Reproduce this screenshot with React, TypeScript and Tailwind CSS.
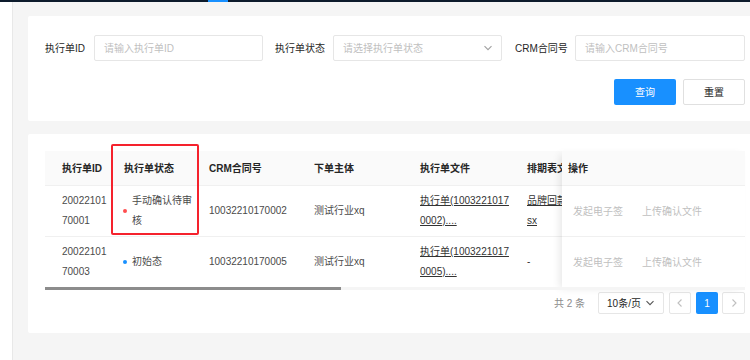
import React from "react";

const font = { fontFamily: '"Liberation Sans", "Noto Sans CJK SC", sans-serif' };

function Chevron({ className = "" }: { className?: string }) {
  return (
    <svg className={className} width="10" height="10" viewBox="0 0 10 10" fill="none">
      <path d="M1.5 3.2 L5 6.7 L8.5 3.2" stroke="currentColor" strokeWidth="1.1" />
    </svg>
  );
}

function Arrow({ dir }: { dir: "l" | "r" }) {
  return (
    <svg width="8" height="10" viewBox="0 0 8 10" fill="none">
      <path d={dir === "l" ? "M5.5 1.5 L2 5 L5.5 8.5" : "M2.5 1.5 L6 5 L2.5 8.5"} stroke="currentColor" strokeWidth="1.1" />
    </svg>
  );
}

const rows = [
  {
    id: ["20022101", "70001"],
    dot: "bg-[#ff4d4f]",
    status: ["手动确认待审", "核"],
    crm: "10032210170002",
    subject: "测试行业xq",
    file: ["执行单(1003221017", "0002)...."],
    sched: ["品牌回款表x", "sx"],
  },
  {
    id: ["20022101", "70003"],
    dot: "bg-[#1890ff]",
    status: ["初始态"],
    crm: "10032210170005",
    subject: "测试行业xq",
    file: ["执行单(1003221017", "0005)...."],
    sched: null as string[] | null,
  },
];

export default function App() {
  return (
    <div className="w-[750px] h-[360px] overflow-hidden bg-[#f5f5f5] relative text-[10px]" style={font}>
      {/* top bar */}
      <div className="h-[2px] bg-[#0d1b2c] flex">
        <div className="ml-[208px] w-[20px] bg-[#1890ff]" />
      </div>
      <div className="flex h-[358px]">
        <div className="w-[13px] bg-white border-r border-[#e8e8e8] shrink-0" />
        <div className="pl-[15px] pt-[14px] flex flex-col gap-[13px]">
          {/* search card */}
          <div className="w-[735px] bg-white rounded-[2px] pl-[17px] pr-[17px] pt-[19px] pb-[16px]">
            <div className="flex items-center h-[26px]">
              <span className="text-[#262626] w-[49px] whitespace-nowrap">执行单ID</span>
              <div className="w-[169px] h-[26px] border border-[#e6e6e6] rounded-[2px] flex items-center pl-[9px] text-[#bfbfbf]">
                请输入执行单ID
              </div>
              <span className="text-[#262626] ml-[12px] w-[58px] whitespace-nowrap">执行单状态</span>
              <div className="w-[169px] h-[26px] border border-[#e6e6e6] rounded-[2px] flex items-center pl-[9px] pr-[8px] justify-between text-[#bfbfbf]">
                <span>请选择执行单状态</span>
                <Chevron className="text-[#a0a0a0]" />
              </div>
              <span className="text-[#262626] ml-[13px] w-[60px] whitespace-nowrap">CRM合同号</span>
              <div className="w-[170px] h-[26px] border border-[#e6e6e6] rounded-[2px] flex items-center pl-[9px] text-[#bfbfbf]">
                请输入CRM合同号
              </div>
            </div>
            <div className="flex justify-end mt-[18px] gap-[7px] w-[700px]">
              <div className="w-[62px] h-[26px] bg-[#1890ff] rounded-[2px] text-white flex items-center justify-center">查询</div>
              <div className="w-[62px] h-[26px] bg-white border border-[#e0e0e0] rounded-[2px] text-[#262626] flex items-center justify-center">重置</div>
            </div>
          </div>

          {/* table card */}
          <div className="w-[735px] h-[199px] bg-white rounded-[2px] pl-[17px] pt-[17px] relative">
            <div className="w-[700px] flex">
              {/* scrolling part */}
              <div className="w-[517px] overflow-hidden">
                <div className="w-[600px]">
                  <div className="flex h-[35px] bg-[#fafafa] border-b border-[#f0f0f0] items-center font-bold text-[#262626] whitespace-nowrap">
                    <div className="w-[66px] pl-[17px]">执行单ID</div>
                    <div className="w-[88px] pl-[13px]">执行单状态</div>
                    <div className="w-[105px] pl-[10px]">CRM合同号</div>
                    <div className="w-[106px] pl-[10px]">下单主体</div>
                    <div className="w-[107px] pl-[10px]">执行单文件</div>
                    <div className="w-[100px] pl-[10px]">排期表文件</div>
                  </div>
                  {rows.map((r, i) => (
                    <div key={i} className="flex h-[51px] border-b border-[#f0f0f0] items-center text-[#4a4a4a] leading-[20px] whitespace-nowrap">
                      <div className="w-[66px] pl-[17px]">
                        {r.id.map((l) => (
                          <div key={l}>{l}</div>
                        ))}
                      </div>
                      <div className="w-[88px] pl-[12px] flex items-center gap-[5px]">
                        <span className={`w-[4px] h-[4px] rounded-full shrink-0 ${r.dot}`} />
                        <div>
                          {r.status.map((l) => (
                            <div key={l}>{l}</div>
                          ))}
                        </div>
                      </div>
                      <div className="w-[105px] pl-[10px]">{r.crm}</div>
                      <div className="w-[106px] pl-[10px]">{r.subject}</div>
                      <div className="w-[107px] pl-[10px] underline text-[#333]">
                        {r.file.map((l) => (
                          <div key={l}>{l}</div>
                        ))}
                      </div>
                      <div className="w-[100px] pl-[10px] text-[#333]">
                        {r.sched ? (
                          <div className="underline">
                            {r.sched.map((l) => (
                              <div key={l}>{l}</div>
                            ))}
                          </div>
                        ) : (
                          <span>-</span>
                        )}
                      </div>
                    </div>
                  ))}
                </div>
              </div>
              {/* fixed column */}
              <div className="w-[183px] h-[137px] bg-white shadow-[-4px_2px_8px_-2px_rgba(0,0,0,0.10)] relative z-10 whitespace-nowrap">
                <div className="h-[35px] bg-[#fafafa] border-b border-[#f0f0f0] flex items-center pl-[6px] font-bold text-[#262626]">操作</div>
                {rows.map((_, i) => (
                  <div key={i} className="h-[51px] border-b border-[#f0f0f0] flex items-center pl-[7px] gap-[11px] text-[#bfbfbf]">
                    <span className="px-[4px]">发起电子签</span>
                    <span className="px-[4px]">上传确认文件</span>
                  </div>
                ))}
              </div>
            </div>
            {/* scrollbar */}
            <div className="w-[700px] h-[3px] bg-[#f5f5f5] -mt-[1px] relative z-20">
              <div className="w-[296px] h-[3px] bg-[#8c8c8c]" />
            </div>
            {/* pagination */}
            <div className="w-[700px] flex items-center justify-end mt-[2px] h-[22px] text-[#595959] whitespace-nowrap">
              <span className="text-[#8c8c8c] mr-[13px]">共 2 条</span>
              <div className="w-[66px] h-[22px] border border-[#e6e6e6] rounded-[2px] flex items-center justify-center gap-[4px] text-[#262626]">
                <span>10条/页</span>
                <Chevron className="text-[#555]" />
              </div>
              <div className="ml-[5px] w-[22px] h-[22px] border border-[#e6e6e6] rounded-[2px] flex items-center justify-center text-[#bfbfbf]">
                <Arrow dir="l" />
              </div>
              <div className="ml-[5px] w-[22px] h-[22px] bg-[#1890ff] rounded-[2px] flex items-center justify-center text-white">1</div>
              <div className="ml-[4px] w-[23px] h-[22px] border border-[#e6e6e6] rounded-[2px] flex items-center justify-center text-[#bfbfbf]">
                <Arrow dir="r" />
              </div>
            </div>
            {/* red highlight box */}
            <div className="absolute left-[83px] top-[10px] w-[88px] h-[91px] border-2 border-[#f5222d] rounded-[2px] z-30 pointer-events-none" />
          </div>
        </div>
      </div>
    </div>
  );
}
